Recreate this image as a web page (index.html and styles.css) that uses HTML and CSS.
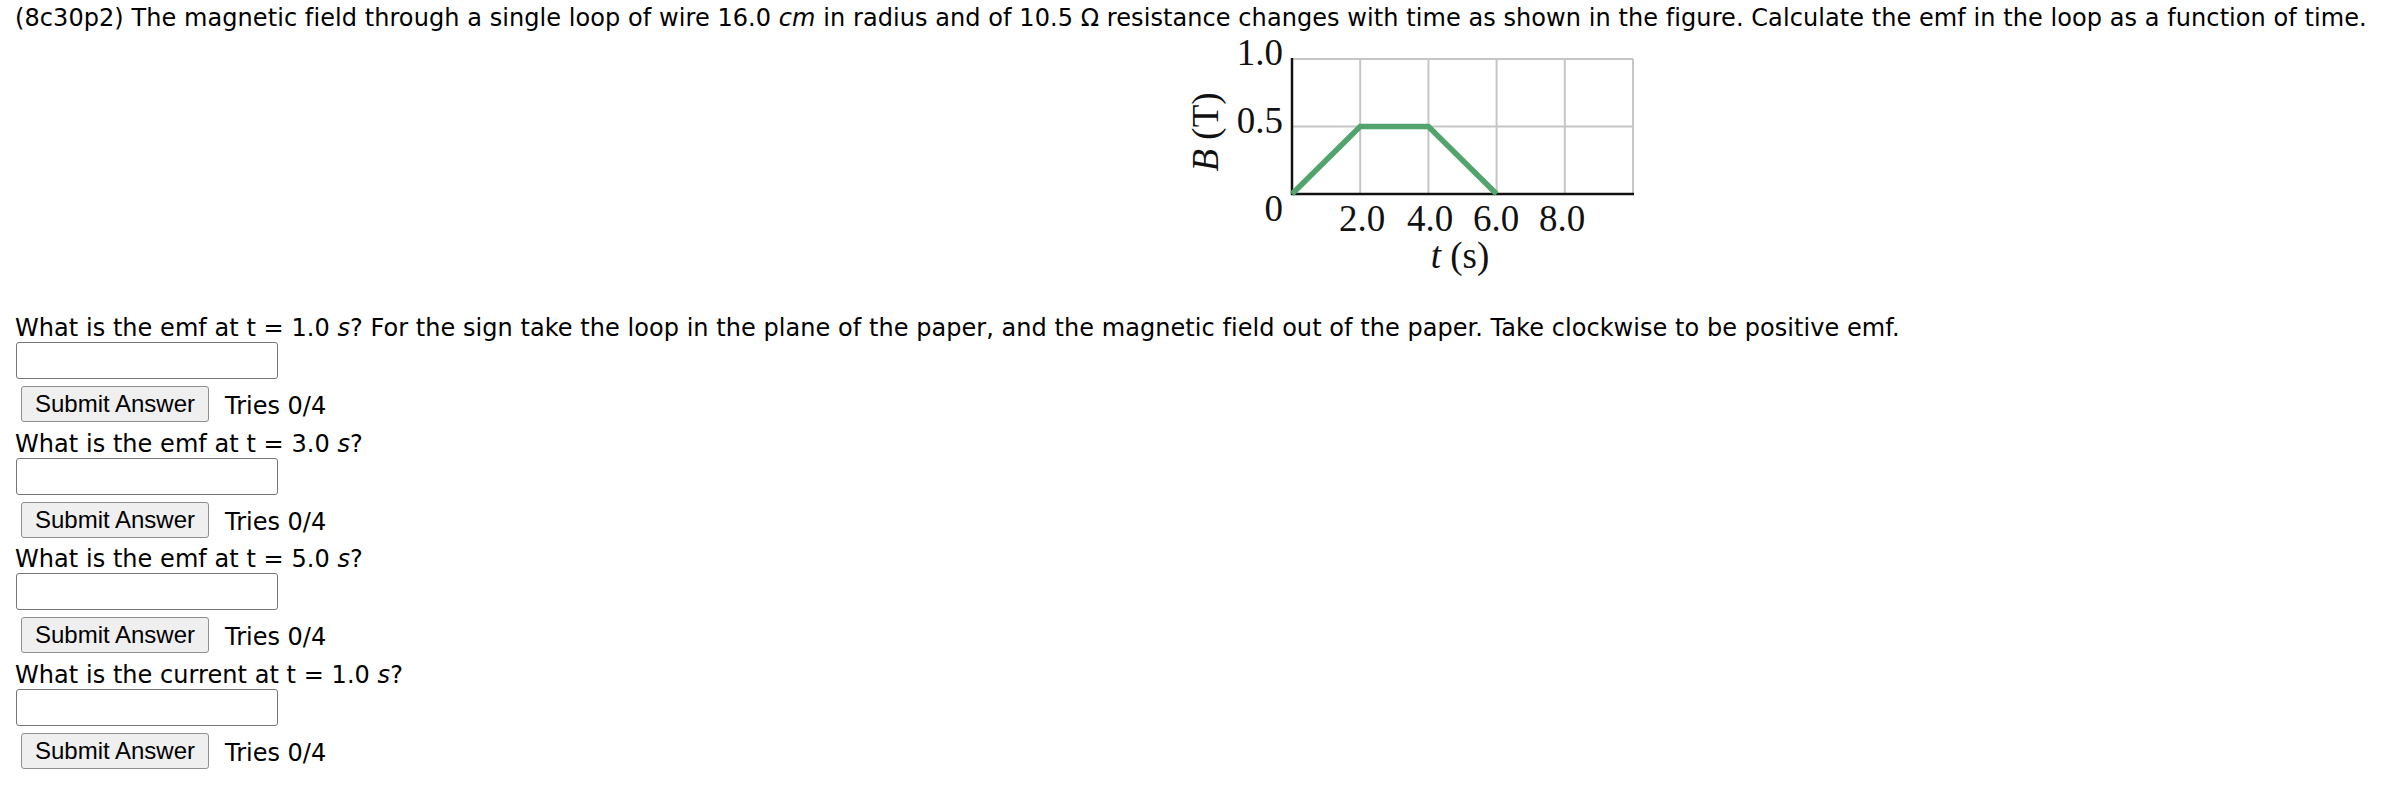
FILE: index.html
```html
<!DOCTYPE html>
<html>
<head>
<meta charset="utf-8">
<link rel="stylesheet" href="styles.css">
</head>
<body>
<p class="title">(8c30p2) The magnetic field through a single loop of wire 16.0 <i>cm</i> in radius and of 10.5 Ω resistance changes with time as shown in the figure. Calculate the emf in the loop as a function of time.</p>
<div class="figure">
<svg class="graph" width="470" height="248" viewBox="0 0 470 248" xmlns="http://www.w3.org/2000/svg">
  <g transform="translate(0,4)">
  <g stroke="#c6c6c6" stroke-width="2" fill="none">
    <line x1="112" y1="23" x2="453" y2="23"/>
    <line x1="112" y1="90.5" x2="453" y2="90.5"/>
    <line x1="180.2" y1="23" x2="180.2" y2="158"/>
    <line x1="248.4" y1="23" x2="248.4" y2="158"/>
    <line x1="316.6" y1="23" x2="316.6" y2="158"/>
    <line x1="384.8" y1="23" x2="384.8" y2="158"/>
    <line x1="453" y1="23" x2="453" y2="158"/>
  </g>
  <g stroke="#111" stroke-width="2.5">
    <line x1="112" y1="22" x2="112" y2="159"/>
    <line x1="111" y1="158" x2="454" y2="158"/>
  </g>
  <polyline points="112,158 180.2,90.5 248.4,90.5 316.6,158" fill="none" stroke="#52a46d" stroke-width="5.5" stroke-linejoin="miter"/>
  <g class="lbl" font-family="'Liberation Serif', 'DejaVu Serif', serif" font-size="37" fill="#111">
    <text x="103" y="29" text-anchor="end">1.0</text>
    <text x="103" y="97" text-anchor="end">0.5</text>
    <text x="103" y="185" text-anchor="end">0</text>
    <text x="182" y="195" text-anchor="middle">2.0</text>
    <text x="250" y="195" text-anchor="middle">4.0</text>
    <text x="316" y="195" text-anchor="middle">6.0</text>
    <text x="382" y="195" text-anchor="middle">8.0</text>
    <text x="280" y="232" text-anchor="middle"><tspan font-style="italic">t</tspan> (s)</text>
    <text transform="translate(38,96) rotate(-90)" text-anchor="middle"><tspan font-style="italic">B</tspan> (T)</text>
  </g>
  </g>
</svg>
</div>
<div class="questions">
  <div class="q">
    <div class="qtext">What is the emf at t = 1.0 <i>s</i>? For the sign take the loop in the plane of the paper, and the magnetic field out of the paper. Take clockwise to be positive emf.</div>
    <input class="answer" type="text">
    <div class="row"><button class="submit">Submit Answer</button><span class="tries">Tries 0/4</span></div>
  </div>
  <div class="q">
    <div class="qtext">What is the emf at t = 3.0 <i>s</i>?</div>
    <input class="answer" type="text">
    <div class="row"><button class="submit">Submit Answer</button><span class="tries">Tries 0/4</span></div>
  </div>
  <div class="q">
    <div class="qtext">What is the emf at t = 5.0 <i>s</i>?</div>
    <input class="answer" type="text">
    <div class="row"><button class="submit">Submit Answer</button><span class="tries">Tries 0/4</span></div>
  </div>
  <div class="q">
    <div class="qtext">What is the current at t = 1.0 <i>s</i>?</div>
    <input class="answer" type="text">
    <div class="row"><button class="submit">Submit Answer</button><span class="tries">Tries 0/4</span></div>
  </div>
</div>
</body>
</html>
```
FILE: styles.css
```css
html, body {
  background: #ffffff;
}
body {
  margin: 0;
  padding: 4px 12px;
  font-family: "DejaVu Sans", Verdana, sans-serif;
  font-size: 24px;
  line-height: 28px;
  color: #000;
}
.title {
  margin: 0 0 0 3px;
  white-space: nowrap;
  letter-spacing: 0.07px;
}
.figure {
  margin-top: 0;
  padding-left: 1168px;
  height: 248px;
}
.graph {
  display: block;
  overflow: visible;
}
.questions {
  margin-top: 35px;
  display: flex;
  flex-direction: column;
  gap: 8.5px;
}
.q {
  display: flex;
  flex-direction: column;
  align-items: flex-start;
}
.qtext {
  line-height: 27px;
  margin-left: 3px;
  letter-spacing: 0.05px;
}
.answer {
  box-sizing: border-box;
  width: 262px;
  height: 37px;
  margin: 0 0 0 4px;
  border: 1.5px solid #767676;
  border-radius: 3px;
  background: #fff;
  padding: 0;
}
.row {
  margin-top: 7px;
  display: flex;
  align-items: center;
  height: 36px;
}
.submit {
  box-sizing: border-box;
  width: 188px;
  height: 36px;
  margin-left: 9px;
  padding: 0;
  border: 1.5px solid #8f8f8f;
  border-radius: 3px;
  background: #efefef;
  font-family: "Liberation Sans", Arial, sans-serif;
  font-size: 24px;
  color: #000;
}
.tries {
  margin-left: 16px;
  line-height: 28px;
  padding-top: 4px;
}
```
